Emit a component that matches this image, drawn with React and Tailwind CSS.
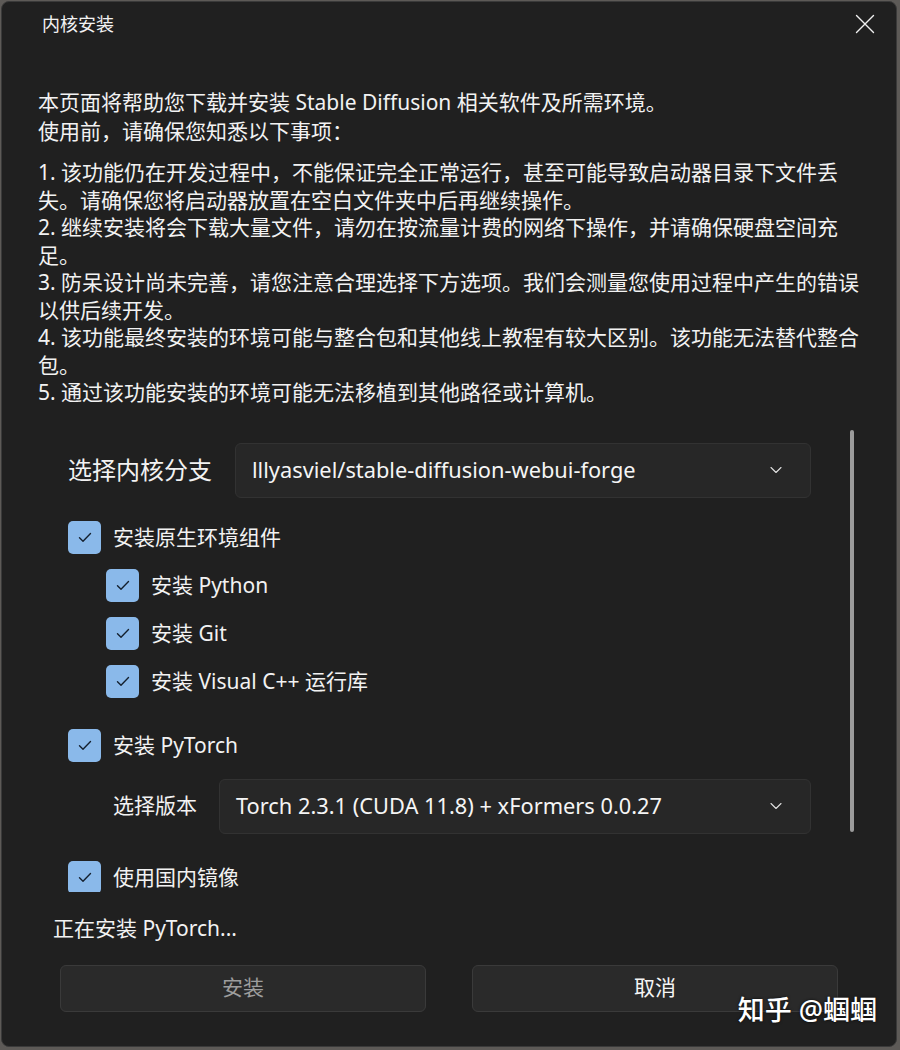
import { ChevronDown } from "lucide-react";

const font = { fontFamily: '"Noto Sans", "Noto Sans CJK SC", sans-serif' };

const Check = ({ label, className = "" }) => (
  <div className={`flex items-center gap-3 ${className}`}>
    <div className="flex h-[33px] w-[33px] items-center justify-center rounded-[5px] bg-[#8ab9ea]">
      <svg width="14" height="11" viewBox="0 0 14 11" fill="none">
        <path d="M1.5 5.8 L5 9.2 L12.5 1.6" stroke="#14202e" strokeWidth="1.4" strokeLinecap="round" strokeLinejoin="round" />
      </svg>
    </div>
    <span className="text-[21px] leading-[28px] text-[#f2f2f2]">{label}</span>
  </div>
);

const Select = ({ value, className = "" }) => (
  <div
    className={`flex h-[55px] items-center justify-between rounded-[6px] border border-[#323232] bg-[#272727] pl-4 pr-6 ${className}`}
  >
    <span className="text-[21.8px] text-[#f5f5f5] whitespace-nowrap">{value}</span>
    <ChevronDown size={20} strokeWidth={1.3} className="text-[#e0e0e0]" />
  </div>
);

const notes = [
  "1. 该功能仍在开发过程中，不能保证完全正常运行，甚至可能导致启动器目录下文件丢",
  "失。请确保您将启动器放置在空白文件夹中后再继续操作。",
  "2. 继续安装将会下载大量文件，请勿在按流量计费的网络下操作，并请确保硬盘空间充",
  "足。",
  "3. 防呆设计尚未完善，请您注意合理选择下方选项。我们会测量您使用过程中产生的错误",
  "以供后续开发。",
  "4. 该功能最终安装的环境可能与整合包和其他线上教程有较大区别。该功能无法替代整合",
  "包。",
  "5. 通过该功能安装的环境可能无法移植到其他路径或计算机。",
];

export default function App() {
  return (
    <div className="h-[1050px] w-[900px] bg-[#5d5a57] pt-px pl-px" style={font}>
      <div className="relative flex h-[1046px] w-[896px] flex-col overflow-hidden rounded-lg border border-[#3a3a3a] bg-[#202020] text-[#f2f2f2]">
        {/* Title bar */}
        <div className="flex h-[44px] shrink-0 items-center justify-between pl-10 pr-[19px]">
          <span className="text-[18px] leading-6">内核安装</span>
          <svg width="20" height="20" viewBox="0 0 20 20" fill="none" className="mr-[2px]">
            <path d="M1.5 1.5 L18.5 18.5 M18.5 1.5 L1.5 18.5" stroke="#f0f0f0" strokeWidth="1.4" strokeLinecap="round" />
          </svg>
        </div>

        {/* Intro */}
        <div className="mt-[42px] pl-9 text-[21px] whitespace-nowrap">
          <p className="leading-[29px]">本页面将帮助您下载并安装 Stable Diffusion 相关软件及所需环境。</p>
          <p className="leading-[29px]">使用前，请确保您知悉以下事项：</p>
          <div className="mt-[13px] leading-[27.5px]">
            {notes.map((line) => (
              <p key={line}>{line}</p>
            ))}
          </div>
        </div>

        {/* Options area */}
        <div className="relative mt-[20px] h-[465px] shrink-0 overflow-hidden pl-[66px] pt-[16px]">
          <div className="flex items-center">
            <span className="w-[167px] text-[24px]">选择内核分支</span>
            <Select value="lllyasviel/stable-diffusion-webui-forge" className="w-[576px]" />
          </div>
          <Check label="安装原生环境组件" className="mt-[23px]" />
          <div className="pl-[38px]">
            <Check label="安装 Python" className="mt-[15px]" />
            <Check label="安装 Git" className="mt-[15px]" />
            <Check label="安装 Visual C++ 运行库" className="mt-[15px]" />
          </div>
          <Check label="安装 PyTorch" className="mt-[31px]" />
          <div className="mt-[17px] flex items-center pl-[45px]">
            <span className="w-[106px] text-[21px]">选择版本</span>
            <Select value="Torch 2.3.1 (CUDA 11.8) + xFormers 0.0.27" className="w-[592px]" />
          </div>
          <Check label="使用国内镜像" className="mt-[27px]" />
          <div className="absolute right-[42px] top-[3px] h-[402px] w-[4px] rounded-full bg-[#9b9b9b]" />
        </div>

        {/* Status and actions */}
        <p className="mt-[22px] pl-[51px] text-[21px] leading-[28px]">正在安装 PyTorch...</p>
        <div className="mt-[23px] flex gap-[46px] pl-[58px]">
          <button className="h-[47px] w-[366px] rounded-[6px] border border-[#3a3a3a] bg-[#2a2a2a] text-[21px] text-[#9d9d9d]">
            安装
          </button>
          <button className="h-[47px] w-[366px] rounded-[6px] border border-[#3a3a3a] bg-[#2a2a2a] text-[21px] text-[#f5f5f5]">
            取消
          </button>
        </div>

        <span className="absolute bottom-[16px] right-[19px] text-[27px] font-medium text-white [text-shadow:0_0_3px_rgba(0,0,0,0.8)]">
          知乎 @蝈蝈
        </span>
      </div>
    </div>
  );
}
